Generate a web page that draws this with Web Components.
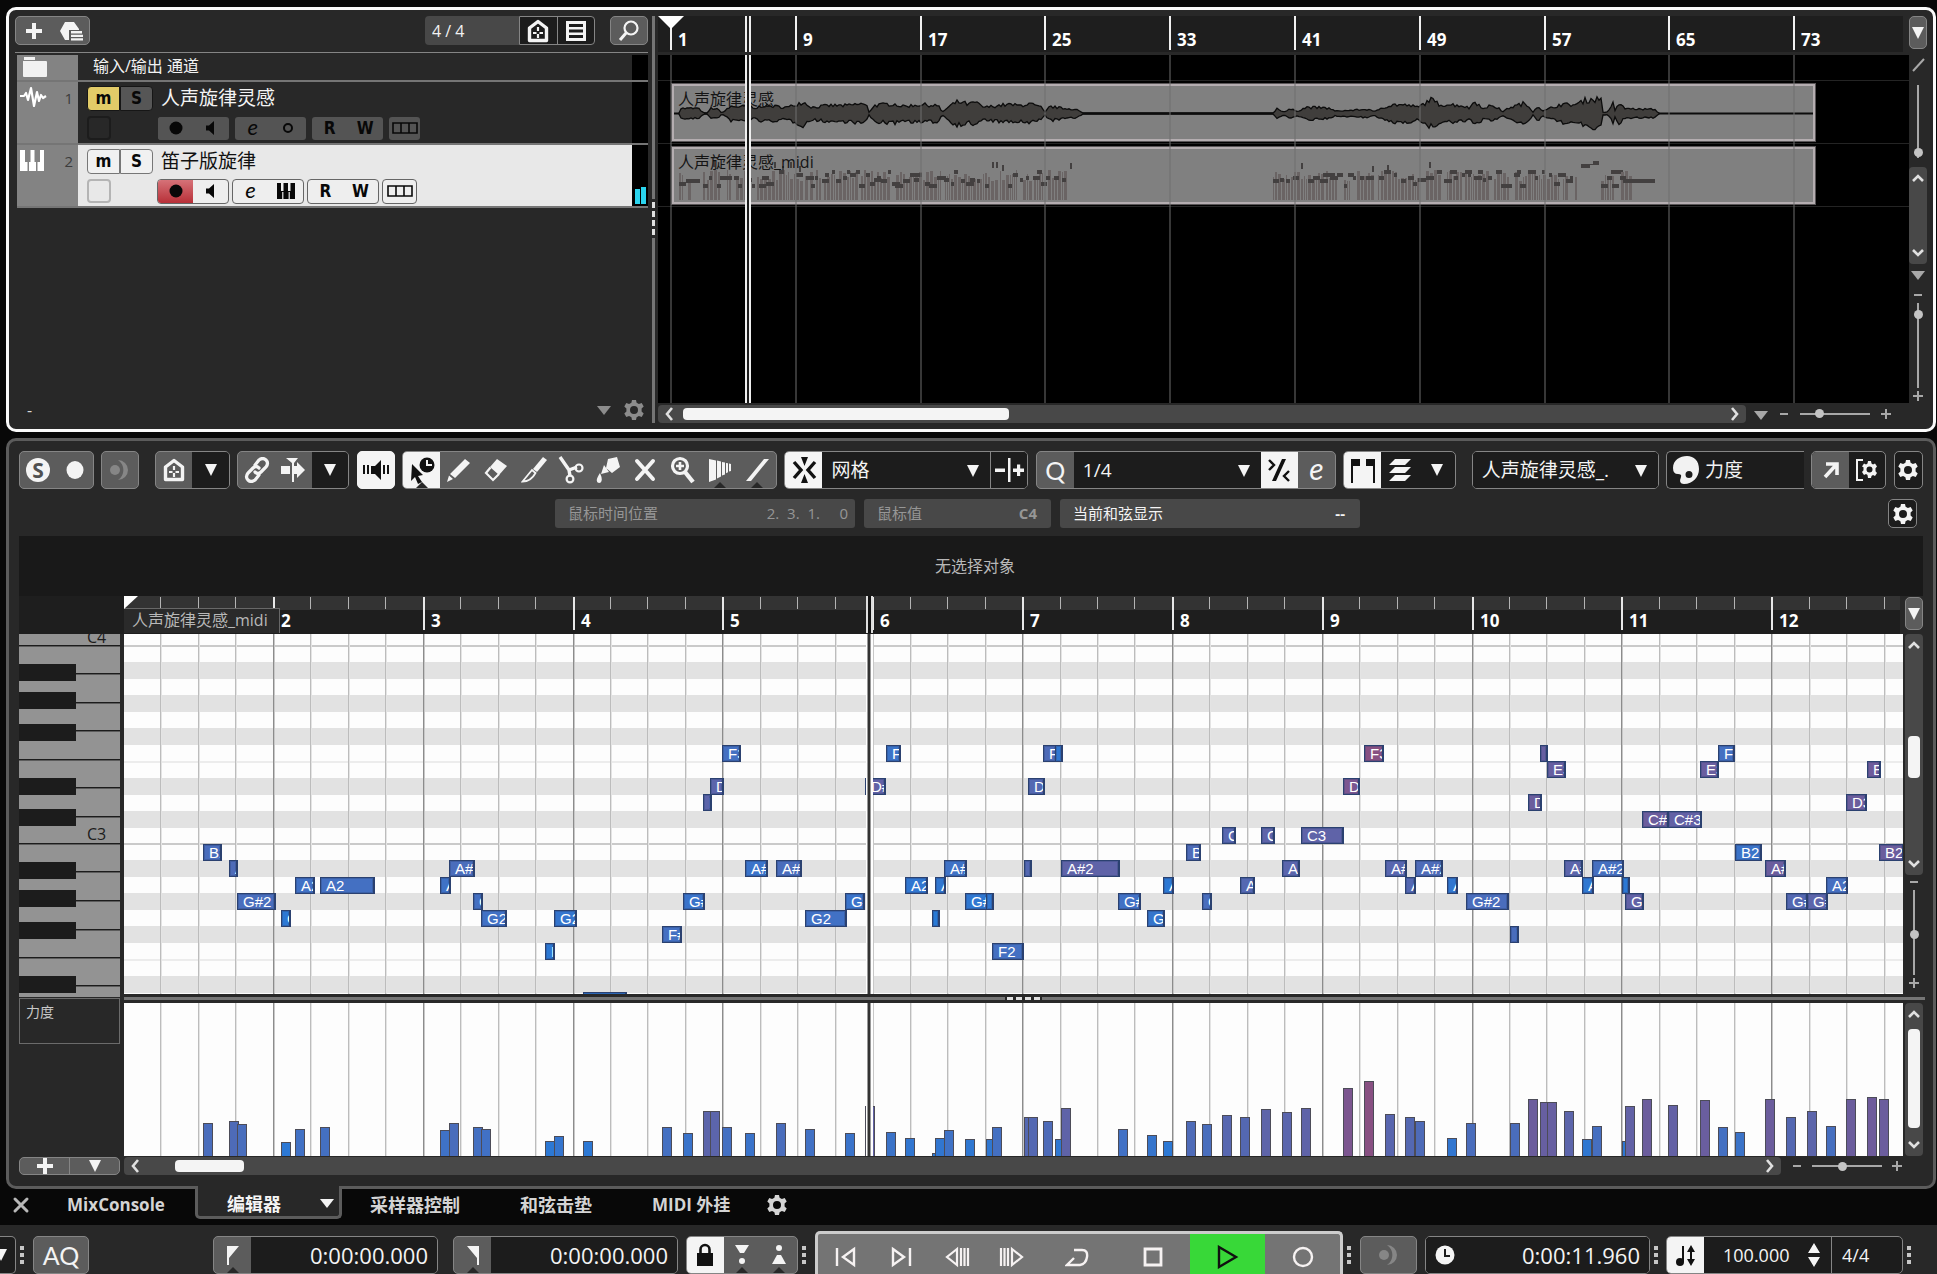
<!DOCTYPE html>
<html lang="zh">
<head>
<meta charset="utf-8">
<title>Project</title>
<style>
html,body{margin:0;background:#080808}
body{font-family:"Open Sans","Noto Sans CJK SC",sans-serif;font-size:16px;line-height:20px;color:#f2f2f2;overflow:hidden}
</style>
</head>
<body>
<daw-app></daw-app>
<script>
const FONT='"Open Sans","Noto Sans CJK SC",sans-serif';
const RESET=`*{box-sizing:border-box}
button,input,select{font:inherit;color:inherit;background:none;border:0;margin:0;padding:0;outline:0;border-radius:0}
button{cursor:pointer;display:flex;align-items:center;justify-content:center}
select{appearance:none;width:100%;height:100%}`;

class El extends HTMLElement{
  connectedCallback(){
    if(this.shadowRoot)return;
    this.attachShadow({mode:'open'}).innerHTML='<style>'+RESET+this.css()+'</style>'+this.html();
  }
  a(n,d=''){return this.getAttribute(n)??d}
  css(){return ':host{display:block}'}
  html(){return '<slot></slot>'}
}

/* each entry: width, height, markup drawn in that box */
const ICONS={
plus:[18,18,'<path d="M7 1h4v6h6v4h-6v6H7v-6H1V7h6z"/>'],
tag:[26,20,'<path d="M7 1h9l5 7v1H11v10H7L2 10z"/><path d="M13 10h11v2.600H13zM13 13.700h12v2.300H13zM13 17.200h12v2.300H13z"/>'],
home:[24,24,'<path d="M12 2.500 3.500 9v12.500h17V9z" fill="none" stroke="currentColor" stroke-width="3.400" stroke-linejoin="round"/><path d="M12 8v4m0 3v4M7 14h3.500m3 0H17" stroke="currentColor" stroke-width="2.200"/>'],
list:[22,22,'<path fill-rule="evenodd" d="M1 1h20v20H1zM4 4v3h14V4zM4 9.500v3h14v-3zM4 15v3h14v-3z"/>'],
search:[24,24,'<circle cx="14" cy="9" r="6.500" fill="none" stroke="currentColor" stroke-width="2.200"/><path d="M9.500 13.500 3 21" stroke="currentColor" stroke-width="3"/>'],
folder:[26,22,'<path d="M2 1h11v3H2zM1 5h23q1 0 1 1v14q0 1-1 1H2q-1 0-1-1z"/>'],
wave:[28,22,'<path d="M1 11h4l2-3 2 7 3-12 3 18 3-14 2 9 2-6 2 3 3-2" fill="none" stroke="currentColor" stroke-width="2.200" stroke-linejoin="round"/>'],
keys:[26,24,'<path d="M1 2h5v12h2.500v9H1zM10 14h1.500V2h4v12H17v9h-7zM21 2h4v21h-6.500v-9H21z"/>'],
keys2:[20,18,'<path d="M1 1h4v8h2.500V1h4.500v8h2.500V1H19v16H1z"/><path d="M6.800 10v7M13.200 10v7" stroke="#eee" stroke-width="1.200"/>'],
rec:[16,16,'<circle cx="8" cy="8" r="6.500"/>'],
ring:[16,16,'<circle cx="8" cy="8" r="4" fill="none" stroke="currentColor" stroke-width="2"/>'],
speaker:[16,16,'<path d="M3 5.500h3L11 1v14l-5-4.500H3z"/>'],
lanes:[26,14,'<path d="M1 2h24v10H1zM9 2v10M17 2v10" fill="none" stroke="currentColor" stroke-width="1.600"/>'],
down:[14,12,'<path d="M1 0h12L7 12z"/>'],
downs:[14,9,'<path d="M0 0h14L7 9z"/>'],
gear:[22,22,'<path fill-rule="evenodd" d="M9 1h4l.6 2.800 2.300 1.300L18.700 4l2 3.500-2.100 1.900v3.200l2.100 1.900-2 3.500-2.800-1.100-2.300 1.300L13 21H9l-.6-2.800-2.300-1.300L3.300 18l-2-3.500 2.100-1.900V9.400L1.300 7.500l2-3.500 2.800 1.100 2.300-1.300zM11 7a4 4 0 1 0 0 8 4 4 0 0 0 0-8z"/>'],
solo:[26,26,'<circle cx="13" cy="13" r="12"/><text x="13" y="20.500" text-anchor="middle" font-size="21" font-weight="700" font-family="Open Sans" fill="#505050">S</text>'],
dot:[18,20,'<ellipse cx="9" cy="10" rx="8.500" ry="9"/>'],
moon:[22,22,'<circle cx="6" cy="11" r="5"/><path d="M9 1a10 10 0 1 1 0 20 12 12 0 0 0 0-20z"/>'],
link:[26,26,'<g fill="none" stroke="currentColor" stroke-width="3.200" stroke-linecap="round"><path d="M11 8l4-5q4-3 7 0t0 7l-5 5q-3 3-6 0"/><path d="M15 18l-4 5q-4 3-7 0t0-7l5-5q3-3 6 0"/></g>'],
autoscroll:[26,26,'<path d="M1 9h9v8H1zM14 9h3V5l8 8-8 8v-4h-3zM6 1h12l-4 5v19h-2V6z"/>'],
sound:[28,24,'<path d="M9 8h4l6-6v20l-6-6H9zM1 7h2v9H1zM5 7h2v9H5zM21 7h2v9h-2zM25 7h2v9h-2z"/>'],
pointer:[30,28,'<path d="M5 8 16 19l-5 1 4 6-4 2-3-7-4 4z"/><circle cx="20" cy="9" r="7.500"/><path d="M20 4v5h5" fill="none" stroke="#f4f4f4" stroke-width="2"/>'],
pencil:[26,26,'<path d="M19 2l5 4L9 21l-5-4zM3 18.500 7 22l-6 3z"/>'],
eraser:[26,26,'<path d="M14 2 24 9l-8 9L7 10z"/><path d="M7.500 10.500 3 16l7 7 6-6" fill="none" stroke="currentColor" stroke-width="2.200"/>'],
knife:[26,26,'<path d="M22 0l4 3-10 12-4-3z"/><path d="M11 13 1.500 24.500q8.500 0 13-8.500z" fill="none" stroke="currentColor" stroke-width="1.800"/>'],
scissors:[26,28,'<path d="M2 1l9 13 8-3M11 14l1 6" fill="none" stroke="currentColor" stroke-width="3.400"/><circle cx="21" cy="12" r="3.500" fill="none" stroke="currentColor" stroke-width="2.200"/><circle cx="12" cy="23" r="3.400" fill="none" stroke="currentColor" stroke-width="2.200"/>'],
glue:[26,28,'<path d="M13 3l9-2 3 10-8 6-6-5zM9 9l5 7-8 2zM5 17q4 9-1 10-5-1 1-10z"/>'],
cross:[22,24,'<path d="M3 3l16 18M19 3 3 21" stroke="currentColor" stroke-width="4" stroke-linecap="round"/>'],
close:[18,18,'<path d="M3 3l12 12M15 3 3 15" stroke="#b8b8b8" stroke-width="3" stroke-linecap="round"/>'],
zoom:[26,28,'<circle cx="10" cy="10" r="7.500" fill="none" stroke="currentColor" stroke-width="3.200"/><path d="M10 6v8M6 10h8" stroke="currentColor" stroke-width="2.600"/><path d="m15 16 8 10" stroke="currentColor" stroke-width="4.400"/>'],
comp:[26,26,'<path d="M2 2l7 1.500v19L2 25zM10 3.500l4 1v15l-4 2zM15 5l3 .5v12l-3 1zM19 6l2 .3v9l-2 1zM22 6.500l2 .5v7l-2 .5z"/>'],
line:[26,26,'<path d="M20 2h5L7 24H2z"/>'],
snap:[26,30,'<path d="M10 2h7l-3.500 9zM10 28h7l-3.500-9z"/><path d="M3 7l7 8-7 8M24 7l-7 8 7 8" fill="none" stroke="currentColor" stroke-width="3.400"/>'],
rel:[30,26,'<path d="M1 11.500h10v3.500H1zM14 1h2.500v24H14zM19 11.500h4V7.500h3.200v4H30v3.500h-3.800v4H23v-4h-4z"/>'],
iq:[24,26,'<path d="M15 2h4L9 24H5z"/><path d="M2 3l5 5-5 5M22 14l-5 5 5 5" fill="none" stroke="currentColor" stroke-width="2.400"/>'],
flags:[26,28,'<path d="M1 3h9v7H3v17H1zM16 3h9v24h-2V10h-7z"/>'],
layers:[26,24,'<path d="M8 1h16l-6 6H2zM8 9h16l-6 6H2zM8 17h16l-6 6H2z"/>'],
palette:[28,30,'<path fill-rule="evenodd" d="M15 1c7 0 12 5 12 13S21 29 12 29q-6 0-3-7 1-3-3-3-5 0-5-6C1 5 8 1 15 1zM17 16a3.500 3.500 0 1 0 0 7 3.500 3.500 0 0 0 0-7z"/>'],
arrow:[20,20,'<path d="M5 4h11v11M15 5 4 17" fill="none" stroke="currentColor" stroke-width="3.600"/>'],
setup:[24,24,'<path d="M8 2H2v20h6" fill="none" stroke="currentColor" stroke-width="2"/><path fill-rule="evenodd" d="M13 3h3l.5 2.500 1.500 1L20 5.500l2 3-1.500 1.800v3l1.500 1.700-2 3-2-1-1.500 1L16 20h-3l-.5-3-1.500-1-2 1-2-3 1.500-1.700v-3L7 8.500l2-3 2 1 1.500-1zM14.500 8.500a3 3 0 1 0 0 6 3 3 0 0 0 0-6z"/>'],
slash:[14,14,'<path d="M13 1 2 13" stroke="currentColor" stroke-width="2"/>'],
minus:[10,10,'<path d="M1 4h8v2H1z"/>'],
plus2:[10,10,'<path d="M4 0h2v4h4v2H6v4H4V6H0V4h4z"/>'],
left:[10,14,'<path d="M8 1 3 7l5 6" fill="none" stroke="currentColor" stroke-width="2.600"/>'],
right:[10,14,'<path d="m2 1 5 6-5 6" fill="none" stroke="currentColor" stroke-width="2.600"/>'],
up2:[12,10,'<path d="m1 8 5-5 5 5" fill="none" stroke="currentColor" stroke-width="2.600"/>'],
down2:[12,10,'<path d="m1 2 5 5 5-5" fill="none" stroke="currentColor" stroke-width="2.600"/>'],
lloc:[16,20,'<path d="M2 1h12L4 13v7H2z"/>'],
rloc:[16,20,'<path d="M14 1H2l10 12v7h2z"/>'],
lock:[18,24,'<path d="M1 10h16v13H1z"/><path d="M4.500 11V6.500a4.500 4.500 0 0 1 9 0V11" fill="none" stroke="currentColor" stroke-width="2.600"/>'],
pin:[16,22,'<path d="M1 1h14l-5 8H6z"/><circle cx="8" cy="17" r="3"/>'],
pout:[16,22,'<path d="M1 20h14l-5-9H6z"/><circle cx="8" cy="4" r="3"/>'],
prev:[22,22,'<path d="M2 2v18M19 3 8 11l11 8z" fill="none" stroke="currentColor" stroke-width="2.400"/>'],
next:[22,22,'<path d="M20 2v18M3 3l11 8-11 8z" fill="none" stroke="currentColor" stroke-width="2.400"/>'],
rew:[26,22,'<path d="M13 3 3 11l10 8zM17 2v18M20.500 2v18M24 2v18" fill="none" stroke="currentColor" stroke-width="2.200"/>'],
fwd:[26,22,'<path d="m13 3 10 8-10 8zM9 2v18M5.500 2v18M2 2v18" fill="none" stroke="currentColor" stroke-width="2.200"/>'],
cycle:[26,22,'<path d="M9 4h8q6 0 5 7t-7 8H2l7-7" fill="none" stroke="currentColor" stroke-width="2.400"/>'],
stop:[22,22,'<path d="M3 3h16v16H3z" fill="none" stroke="currentColor" stroke-width="2.800"/>'],
play:[22,24,'<path d="m2 2 17 10L2 22z" fill="none" stroke="currentColor" stroke-width="2.400"/>'],
record:[22,22,'<circle cx="11" cy="11" r="9" fill="none" stroke="currentColor" stroke-width="2.400"/>'],
clock:[20,20,'<circle cx="10" cy="10" r="9.500"/><path d="M10 4v7h5" fill="none" stroke="#1c1c1c" stroke-width="2"/>'],
tempo:[22,24,'<circle cx="5" cy="19" r="4"/><path d="M7 3h2v16H7zM12 9l4-7 4 7h-3v7h3l-4 7-4-7h3V9z"/>'],
spin:[12,24,'<path d="M0 10 6 0l6 10zM0 14l6 10 6-10z"/>'],
dots:[4,20,'<path d="M0 1h4v4H0zM0 8h4v4H0zM0 15h4v4H0z"/>']
};
customElements.define('daw-icon',class extends El{
  css(){return ':host{display:block;flex:none}svg{display:block}'}
  html(){const [w,h,m]=ICONS[this.a('name')];
    return `<svg width="${w}" height="${h}" viewBox="0 0 ${w} ${h}" fill="currentColor" aria-hidden="true">${m}</svg>`}
});
const ic=n=>`<daw-icon name="${n}"></daw-icon>`;

/* bordered strip that joins several cells */
customElements.define('tool-group',class extends El{
  css(){return `:host{display:flex;flex:none;height:38px;border:1px solid #858585;border-radius:5px;overflow:hidden;background:#5c5c5c}
  :host([dark]){background:#1c1c1c}:host([on]){background:#f4f4f4;border-color:#f4f4f4}:host([short]){height:29px}`}
});
customElements.define('tool-cell',class extends El{
  css(){return `:host{display:block;position:relative;flex:1 1 0;min-width:0;color:#f4f4f4}
  :host([tone=dark]){background:#1c1c1c}:host([tone=on]){background:#f4f4f4;color:#111}:host([tone=off]){color:#868686}
  :host([line]){border-left:1px solid #858585}
  :host([fix]){flex:0 0 37px}
  button{width:100%;height:100%}
  .txt{font-size:25px;line-height:30px;font-family:Lato,"Open Sans",sans-serif}
  .e{font:italic 30px/30px Lato,sans-serif;padding-bottom:5px}
  i{position:absolute;left:50%;bottom:0;margin-left:-6px;border:6px solid transparent;border-top:0;border-bottom-color:#282828}`}
  html(){const t=this.a('text');
    return `<button type="button" aria-label="${this.a('label',this.a('icon')||t)}">${t?`<span class="${t==='e'?'e':'txt'}">${t}</span>`:ic(this.a('icon'))}</button>${this.hasAttribute('menu')?'<i></i>':''}`}
});
customElements.define('tool-select',class extends El{
  css(){return `:host{display:block;position:relative;flex:1;min-width:0;background:#1c1c1c;font-size:19px;color:#f4f4f4}
  select{padding-left:9px;line-height:28px}
  daw-icon{position:absolute;right:10px;top:50%;margin-top:-5px;pointer-events:none}`}
  html(){return `<select aria-label="${this.a('label')}"><option>${this.a('value')}</option></select>${ic('down')}`}
});

/* zoom slider with end signs */
customElements.define('zoom-slider',class extends El{
  css(){return `:host{display:flex;align-items:center;gap:8px;color:#a8a8a8}
  :host([vertical]){flex-direction:column;gap:3px}
  input{appearance:none;width:70px;height:14px;background:linear-gradient(#a8a8a8,#a8a8a8) center/100% 2px no-repeat}
  :host([vertical]) input{writing-mode:vertical-lr;width:14px;height:var(--len,85px);background-size:2px 100%}
  input::-webkit-slider-thumb{appearance:none;width:9px;height:9px;border-radius:5px;background:#c4c4c4}`}
  html(){const bare=this.hasAttribute('bare');
    return (bare?'':ic('minus'))+`<input type="range" aria-label="${this.a('label')}" value="${this.a('value',30)}">`+(bare?'':ic('plus2'))}
});
customElements.define('scroll-bar',class extends El{
  css(){return `:host{display:flex;align-items:center;justify-content:space-between;background:#484848;border-radius:4px;color:#e0e0e0;height:18px;padding:0 6px;flex:1}
  :host([vertical]){flex-direction:column;width:18px;height:auto;padding:6px 0}
  .track{flex:1;display:flex;align-self:stretch;align-items:center}
  .thumb{background:#f4f4f4;border-radius:4px;height:12px;width:var(--size);margin-left:var(--at)}
  :host([vertical]) .track{flex-direction:column}
  :host([vertical]) .thumb{width:12px;height:var(--size);margin:var(--at) 0 0}`}
  html(){const v=this.hasAttribute('vertical');
    return ic(v?'up2':'left')+`<div class="track">${this.hasAttribute('full')?'':'<div class="thumb"></div>'}</div>`+ic(v?'down2':'right')}
});

/* ---------- track list ---------- */
customElements.define('track-row',class extends El{
  css(){return `:host{display:flex;height:63px;border-bottom:2px solid #757575;color:#f4f4f4}
  .gut{width:61px;background:#838383;display:flex;justify-content:space-between;padding:3px 5px 0 2px;color:#fff}
  .num{color:#3c3c3c;font-size:15px;line-height:26px}
  .body{flex:1;padding:4px 0 0 9px;display:flex;flex-direction:column;gap:6px}
  :host([sel]) .body{background:#e8e8e8;color:#111}
  .l{display:flex;align-items:center;height:24px}
  .ms{display:flex;width:66px;height:25px;margin-right:8px}
  .ms button{flex:1;background:#565656;border:1px solid #161616;color:#080808;border-radius:0 4px 4px 0}
  .ms button:first-child{border-radius:4px 0 0 4px;background:#e2cb68}
  :host([sel]) .ms button{background:#f1f1f1;border-color:#777}
  b{font:700 17px/20px "DejaVu Sans Condensed","DejaVu Sans",sans-serif}
  .name{font-size:19px;line-height:24px}
  .sq{width:24px;height:24px;border:2px solid #1c1c1c;border-radius:4px;margin-right:47px}
  :host([sel]) .sq{border-color:#b4b4b4;margin-right:46px}
  .g{display:flex;width:71px;height:23px;background:#545454;border-radius:3px;color:#080808;margin-right:6px;overflow:hidden}
  .g.s{width:31px}
  :host([sel]) .g{width:72px;height:25px;margin-right:3px;background:#eee;border:1px solid #666;border-radius:4px}
  :host([sel]) .g.s{width:35px}
  .g button{flex:1}.rec{background:#545454}
  :host([sel]) .rec{background:linear-gradient(#d67278,#b83038)}
  em{font:italic 22px/20px Lato,sans-serif;padding-bottom:3px}
  .meter{width:16px;background:#000;display:flex;align-items:flex-end;gap:1px;padding:0 2px 2px 3px}
  .meter i{width:5px;background:#2ad4ee;height:15px}.meter i+i{height:17px}`}
  html(){const s=this.hasAttribute('sel');
    return `<div class="gut">${ic(this.a('icon'))}<span class="num">${this.a('num')}</span></div>
    <div class="body"><div class="l"><div class="ms"><button aria-label="mute"><b>m</b></button><button aria-label="solo"><b>S</b></button></div><span class="name"><slot></slot></span></div>
    <div class="l"><button class="sq" aria-label="colour"></button>
    <div class="g"><button class="rec" aria-label="record">${ic('rec')}</button><button aria-label="monitor">${ic('speaker')}</button></div>
    <div class="g"><button aria-label="edit"><em>e</em></button><button aria-label="instrument">${ic(s?'keys2':'ring')}</button></div>
    <div class="g"><button aria-label="read"><b>R</b></button><button aria-label="write"><b>W</b></button></div>
    <div class="g s"><button aria-label="lanes">${ic('lanes')}</button></div></div></div>
    <div class="meter">${s?'<i></i><i></i>':''}</div>`}
});
customElements.define('track-list',class extends El{
  css(){return `:host{display:flex;flex-direction:column;width:633px;flex:none}
  .bar{display:flex;height:29px}
  .bar tool-group:first-child{width:75px}
  .sig{width:94px;background:#484848;border-radius:4px 0 0 4px;margin-left:auto;padding-left:7px;font-size:16px}
  .pair{width:76px;margin-right:15px;border-radius:0 4px 4px 0}.find{width:38px}
  .rows{border-top:1px solid #858585;margin-top:7px;padding:2px 0 0 2px}
  .io{display:flex;height:27px;border-bottom:2px solid #757575}
  .io div:first-child{width:61px;background:#838383;padding:1px 0 0 5px}
  .io div:last-child{width:16px;background:#000}
  .io span{flex:1;padding-left:15px;line-height:22px}
  .foot{display:flex;align-items:center;margin:auto 0 1px;height:24px;color:#8c8c8c;gap:12px;padding:0 3px 0 12px}
  .foot span{flex:1;color:#d8d8d8}`}
  html(){return `<div class="bar"><tool-group short><tool-cell icon="plus"></tool-cell><tool-cell icon="tag"></tool-cell></tool-group>
    <input class="sig" aria-label="Signature" value="4 / 4">
    <tool-group short dark class="pair"><tool-cell icon="home"></tool-cell><tool-cell icon="list" line></tool-cell></tool-group>
    <tool-group short class="find"><tool-cell icon="search"></tool-cell></tool-group></div>
  <div class="rows"><div class="io"><div>${ic('folder')}</div><span>输入/输出 通道</span><div></div></div>
  <track-row icon="wave" num="1">人声旋律灵感</track-row>
  <track-row icon="keys" num="2" sel>笛子版旋律</track-row></div>
  <div class="foot"><span>-</span>${ic('downs')}${ic('gear')}</div>`}
});

/* ---------- arrangement ---------- */
let seed=7;const rnd=()=>(seed=(seed*16807)%2147483647)/2147483647;
const BAR8=124.8,X0=12;
/* x and half height of the audio envelope */
const ENV=[[8,0],[10,5],[27,5],[33,0],[36,0],[40,5],[47,4],[51,0],[56,4],[60,7],[79,7],[83,4],[91,8],[117,6],[124,9],[132,12],[141,6],[157,8],[177,8],[191,10],[196,7],[198,1],[203,8],[222,10],[232,7],[249,9],[267,8],[271,1],[281,9],[287,12],[299,9],[303,12],[313,6],[327,8],[337,9],[349,8],[358,10],[370,6],[374,1],[379,7],[392,5],[405,4],[412,0],[602,0],[606,5],[613,1],[619,4],[627,2],[635,6],[642,6],[659,5],[664,2],[682,3],[698,4],[703,1],[711,6],[724,9],[739,8],[747,6],[756,12],[758,15],[769,9],[779,9],[791,8],[799,5],[803,13],[809,8],[815,4],[820,9],[829,4],[831,1],[839,6],[852,10],[859,6],[862,1],[867,8],[872,2],[879,5],[889,9],[905,9],[915,14],[930,15],[932,1],[937,1],[942,10],[944,3],[947,10],[954,5],[969,4],[983,4],[988,0]];
function wave(){
  const up=[],dn=[];let k=0;
  for(let x=ENV[0][0];x<=ENV.at(-1)[0];x+=2){
    while(ENV[k+1][0]<x)k++;
    const [x1,a1]=ENV[k],[x2,a2]=ENV[k+1],a=a1+(a2-a1)*(x-x1)/(x2-x1);
    up.push(x+','+(30-a*(.7+rnd()*.45)).toFixed(1));dn.unshift(x+','+(31+a*(.7+rnd()*.45)).toFixed(1));
  }
  return [...up,...dn].join(' ');
}
function sticks(a,b){
  let s='';
  for(let x=a;x<b;){const w=1+Math.floor(rnd()*3),t=24+rnd()*11;
    s+=`<path d="M${x} ${t.toFixed(0)}h${w}V54h-${w}z" fill="#6a6464"/>`;x+=w+1+(rnd()>.85?Math.floor(rnd()*7):0);}
  for(let x=a;x<b;x+=3+Math.floor(rnd()*6)){const w=rnd()>.88?1:3+Math.floor(rnd()*6),y=w===1?15+Math.floor(rnd()*6):[24,27,30,30,32,33,36,38][Math.floor(rnd()*8)];
    s+=`<rect x="${x}" y="${y}" width="${w===1?2:w}" height="${w===1?6:4}" fill="#434040"/>`;}
  return s;
}
customElements.define('daw-clip',class extends El{
  css(){return `:host{display:block;position:absolute;left:13px;width:1145px;height:59px;background:#808080;border:1px solid #5a5658;box-shadow:inset 0 0 0 2px #b4adb0}
  svg{position:absolute;left:-1px;top:-1px}
  span{position:absolute;left:6px;top:4px;font-size:16px;line-height:22px;color:#141414}`}
  html(){return (this.a('kind')==='audio'
    ?`<svg width="1145" height="59"><path d="M3 30.500H1142" stroke="#0c0c0c" stroke-width="2"/><polygon points="${wave()}" fill="#403e3c" stroke="#0c0c0c" stroke-width="1.300"/></svg>`
    :`<svg width="1145" height="59">${sticks(8,22)+sticks(32,50)+sticks(56,400)+sticks(602,905)}<path d="M910 18h12v-3h6v4h-9v3h-9zM940 24h12v4h-12zM960 33h24v4h-24z" fill="#434040"/>${sticks(930,960)}</svg>`)+'<span><slot></slot></span>'}
});
customElements.define('arrange-ruler',class extends El{
  css(){return `:host{display:block;position:relative;height:36px;background:#1e1e1e;overflow:hidden;margin-right:6px}
  span{position:absolute;top:0;height:34px;border-left:2px solid #f0f0f0;padding:14px 0 0 6px;font-weight:700;font-size:17px;line-height:20px;color:#fff}
  svg{position:absolute;left:0;top:0}
  .ph{position:absolute;left:87px;width:6px;top:0;bottom:0;border:solid #eee;border-width:0 2px}`}
  html(){let s='';for(let i=0;i<10;i++)s+=`<span style="left:${Math.round(X0+i*BAR8)}px">${1+i*8}</span>`;
    return s+'<svg width="28" height="14"><path d="M0 0h26L13 13z" fill="#fff"/></svg><div class="ph"></div>'}
});
customElements.define('arrange-canvas',class extends El{
  css(){return `:host{display:block;position:relative;height:348px;background:#000;overflow:hidden}
  .v{position:absolute;top:0;bottom:0;width:2px;background:#6e6e6e80;z-index:1}
  .h{position:absolute;left:0;right:0;height:1px;background:#242424}
  .ph{position:absolute;left:87px;width:6px;top:0;bottom:0;border:solid #eee;border-width:0 2px;background:#1c1c1c;z-index:2}`}
  html(){let s='';for(let i=0;i<10;i++)s+=`<div class="v" style="left:${Math.round(X0+i*BAR8)}px"></div>`;
    for(const y of[25,88,151])s+=`<div class="h" style="top:${y}px"></div>`;
    return s+'<daw-clip kind="audio" style="top:28px">人声旋律灵感</daw-clip><daw-clip kind="midi" style="top:91px">人声旋律灵感_midi</daw-clip><div class="ph"></div>'}
});
customElements.define('project-zone',class extends El{
  css(){return `:host{display:flex;margin:7px 1px 0 6px;border:3px solid #fbfbfb;border-radius:10px;background:#282828;padding:6px}
  .split{width:3px;margin:0 3px 0 4px;background:linear-gradient(#757575,#757575) 0 0/3px 183px no-repeat,repeating-linear-gradient(#e0e0e0 0 6px,#282828 6px 9px) 0 186px/3px 33px no-repeat,linear-gradient(#757575,#757575) 0 100%/3px calc(100% - 222px) no-repeat}
  .main{flex:1;min-width:0;display:flex;flex-direction:column}
  arrange-canvas{margin-top:3px}
  .hs{display:flex;align-items:center;height:19px;margin-top:1px;padding-right:18px;color:#a8a8a8;gap:8px}
  scroll-bar.h{--size:326px;--at:9px}
  .hs zoom-slider{gap:11px;margin-left:3px}.hs>daw-icon{margin-top:4px}
  .side{width:18px;display:flex;flex-direction:column;align-items:center;color:#a8a8a8}
  .side tool-group{width:18px;height:33px;margin-bottom:9px}
  .top{--len:73px;margin:13px 0 9px}
  .bar{flex:none;height:97px;margin-bottom:7px}
  .side zoom-slider:last-child{margin-top:10px}`}
  html(){return `<track-list></track-list><div class="split"></div>
  <div class="main"><arrange-ruler></arrange-ruler><arrange-canvas></arrange-canvas>
  <div class="hs"><scroll-bar class="h"></scroll-bar>${ic('downs')}<zoom-slider label="Zoom" value="24"></zoom-slider></div></div>
  <div class="side"><tool-group><tool-cell icon="down"></tool-cell></tool-group>${ic('slash')}<zoom-slider vertical bare class="top" label="Waveform zoom" value="98"></zoom-slider>
  <scroll-bar vertical full class="bar"></scroll-bar>${ic('downs')}<zoom-slider vertical label="Track height" value="9"></zoom-slider></div>`}
});

/* ---------- key editor ---------- */
const BEAT=37.46,PX=742; /* beat width and play cursor x */
const PITCH={'C':0,'C#':1,'D':2,'D#':3,'E':4,'F':5,'F#':6,'G':7,'G#':8,'A':9,'A#':10,'B':11};
const laneY=n=>Math.floor(193.5-16.5*n);
const pitch=s=>PITCH[s.slice(0,-1)]+12*(s.at(-1)-3);
/* start, width, pitch, velocity height */
const NOTES=[[203,19,'B2',33],[229,9,'A#2',35],[237,39,'G#2',32],[281,10,'G2',14],[295,20,'A2',27],[320,55,'A2',29],[440,11,'A2',26],[449,26,'A#2',33],[473,10,'G#2',29],[481,26,'G2',27],[545,10,'F2',15],[554,23,'G2',20],[583,44,'D2',15],
[662,20,'F#2',29],[683,22,'G#2',23],[703,9,'D3',45],[710,14,'D#3',45],[722,19,'F3',29],[745,23,'A#2',23],[776,26,'A#2',33],[805,42,'G2',27],[845,20,'G#2',23],[865,21,'D#3',50],[886,15,'F3',24],[905,23,'A2',18],[932,5,'G2',3],[935,11,'A2',18],[944,23,'A#2',26],[965,23,'G#2',17],[986,8,'G#2',17],[992,32,'F2',29],[1024,6,'A#2',39],[1028,17,'D#3',39],[1043,14,'F3',35],[1055,8,'F3',17],[1061,59,'A#2',48],[1118,23,'G#2',27],[1147,18,'G2',21],[1163,11,'A2',15],[1186,15,'B2',35],[1202,10,'G#2',32],[1222,14,'C3',41],[1240,15,'A2',39],[1261,14,'C3',47],[1282,18,'A#2',44],
[1301,43,'C3',48],[1343,17,'D#3',68],[1364,20,'F3',75],[1385,22,'A#2',42],[1405,11,'A2',39],[1415,28,'A#2',35],[1447,11,'A2',18],[1466,43,'G#2',33],[1510,9,'F#2',33],[1528,14,'D3',57],[1540,8,'F3',54],[1547,19,'E3',54],[1564,19,'A#2',45],[1582,12,'A2',17],[1592,32,'A#2',30],[1622,5,'A2',15],[1625,19,'G#2',50],[1642,27,'C#3',57],[1668,34,'C#3',51],[1700,19,'E3',56],[1718,17,'F3',29],[1735,27,'B2',24],[1765,21,'A#2',57],[1786,22,'G#2',39],[1807,21,'G#2',45],[1826,22,'A2',30],[1846,21,'D3',57],[1867,14,'E3',59],[1879,25,'B2',57]];
const STOPS=[[0,[40,122,214]],[15,[44,120,212]],[29,[68,112,194]],[39,[84,104,178]],[50,[98,98,166]],[58,[108,92,156]],[68,[124,86,144]],[75,[136,80,130]]];
function tint(h){let k=0;while(k<STOPS.length-2&&STOPS[k+1][0]<h)k++;
  const [a,c]=STOPS[k],[b,d]=STOPS[k+1],t=(h-a)/(b-a);return `rgb(${c.map((v,i)=>Math.round(v+(d[i]-v)*t)).join()})`}
function grid(){let s='';for(let i=1;i<=47;i++)s+=`<div class="${i%4?'b':'B'}" style="left:${Math.round(i*BEAT-1)}px"></div>`;return s}
const GRIDCSS=`.b,.B{position:absolute;top:0;bottom:0;width:1px;background:#bcbcbc;box-shadow:1px 0 #e4e4e4}.B{background:#8c8c8c;box-shadow:1px 0 #c8c8c8}
.ph{position:absolute;left:${PX}px;width:7px;top:0;bottom:0;background:linear-gradient(90deg,#fff 1px,#999 1px 2px,#333 2px 4px,#999 4px 5px,#fff 5px)}`;
customElements.define('edit-ruler',class extends El{
  css(){return `:host{display:block;position:relative;height:38px;overflow:hidden;margin-right:3px;background:linear-gradient(#333 14px,#1e1e1e 14px)}
  .t{position:absolute;top:1px;height:12px;width:1px;background:#b4b4b4}
  .n{position:absolute;top:1px;height:33px;border-left:2px solid #e8e8e8;padding:14px 0 0 6px;font-weight:700;font-size:17px;line-height:20px;color:#fff}
  .lbl{position:absolute;left:0;top:12px;width:156px;height:25px;background:#2a2a2a;border:solid #686868;border-width:1px 1px 0 0;padding-left:8px;font-size:16px;line-height:23px;color:#b8b8b8;white-space:nowrap}
  svg{position:absolute;left:0;top:0}
  .p{position:absolute;left:${PX}px;width:7px;top:0;height:37px;border:solid #ddd;border-width:0 2px;background:#111}`}
  html(){let s='';for(let i=1;i<=47;i++){const x=Math.round(i*BEAT-1);s+=i%4?`<div class="t" style="left:${x}px"></div>`:`<span class="n" style="left:${x}px">${i/4+1}</span>`}
    return s+'<div class="lbl">人声旋律灵感_midi</div><svg width="14" height="13"><path d="M0 0h14L0 13z" fill="#fff"/></svg><div class="p"></div>'}
});
customElements.define('key-board',class extends El{
  css(){return `:host{display:block;position:relative;width:101px;height:363px;background:#939393;overflow:hidden}
  .w{position:absolute;left:0;right:0;height:2px;background:#1c1c1c;border-bottom:1px solid #5c5c5c}
  .k{position:absolute;left:0;width:57px;height:17px;background:#1c1c1c}
  span{position:absolute;left:68px;font-size:16px;line-height:20px;color:#1c1c1c}`}
  html(){let s='';for(const y of[11,39,68,96,125,153,182,209,237,266,295,323,351])s+=`<div class="w" style="top:${y}px"></div>`;
    for(const y of[30,58,90,144,175,228,256,288,342])s+=`<div class="k" style="top:${y}px"></div>`;
    return s+'<span style="top:-7px">C4</span><span style="top:190px">C3</span>'}
});
customElements.define('note-roll',class extends El{
  css(){return `:host{display:block;position:relative;flex:1;min-height:360px;background:#fdfdfd;overflow:hidden}
  .d{position:absolute;left:0;right:0;height:17px;background:#e2e2e2}
  .o{position:absolute;left:0;right:0;height:2px;background:#cacaca}.f{background:#ececec}${GRIDCSS}
  .n{position:absolute;height:17px;overflow:hidden;border:1px solid #2b4170;border-right-width:2px;box-shadow:inset 0 0 0 1px #2b417050;padding-left:5px;font:15px/16px "Liberation Sans",sans-serif;color:#fff;white-space:nowrap}`}
  html(){let s='';for(let n=-10;n<12;n++)if([1,3,6,8,10].includes((n+24)%12))s+=`<div class="d" style="top:${laneY(n)}px"></div>`;
    s+='<div class="o" style="top:11px"></div><div class="o" style="top:209px"></div><div class="o f" style="top:127px"></div><div class="o f" style="top:325px"></div>'+grid();
    for(const [x,w,p,v] of NOTES)s+=`<div class="n" style="left:${x-124}px;width:${w}px;top:${laneY(pitch(p))}px;background:${tint(v)}">${w>8?p:''}</div>`;
    return s+'<div class="ph"></div>'}
});
customElements.define('velocity-lane',class extends El{
  css(){return `:host{display:block;position:relative;height:153px;background:#fdfdfd;overflow:hidden}${GRIDCSS}
  .v{position:absolute;bottom:0;width:10px;border:1px solid #4c4c58;border-bottom:0}`}
  html(){return grid()+NOTES.map(([x,,,v])=>`<div class="v" style="left:${x-124}px;height:${v}px;background:${tint(v)}"></div>`).join('')+'<div class="ph"></div>'}
});
customElements.define('info-field',class extends El{
  css(){return `:host{display:flex;justify-content:space-between;align-items:center;background:#484848;border-radius:3px;height:29px;padding:0 7px 2px 13px;font-size:15px;color:#969696;white-space:pre}
  :host([strong]){color:#f4f4f4}b{font-weight:700}`}
  html(){return `<span>${this.a('label')}</span><slot></slot>`}
});
customElements.define('editor-toolbar',class extends El{
  css(){return `:host{display:flex;justify-content:space-between}
  .w1{width:38px}.w2{width:75px}.w3{width:112px}.gapr{margin-right:8px}
  .tools{width:375px}.snap{width:244px}.q{width:300px}.ev{width:113px}.part{width:187px}.col{width:138px;border-right:0;border-radius:5px 0 0 5px;align-items:center;font-size:19px;padding-left:5px;gap:5px}.gear{width:29px}`}
  html(){const c=(i,x='')=>`<tool-cell icon="${i}" ${x}></tool-cell>`;
    return `<tool-group class="w2">${c('solo')+c('dot')}</tool-group>
  <tool-group class="w1 gapr">${c('moon','tone="off"')}</tool-group>
  <tool-group class="w2">${c('home')+c('down','tone="dark"')}</tool-group>
  <tool-group class="w3">${c('link')+c('autoscroll')+c('down','tone="dark"')}</tool-group>
  <tool-group class="w1" on>${c('sound','tone="on"')}</tool-group>
  <tool-group class="tools">${c('pointer','tone="on" menu')+['pencil','eraser','knife','scissors','glue','cross','zoom'].map(n=>c(n)).join('')+c('comp','menu')+c('line','menu')}</tool-group>
  <tool-group class="snap" dark>${c('snap','tone="on" fix')}<tool-select label="Snap type" value="网格"></tool-select>${c('rel','tone="dark" fix line')}</tool-group>
  <tool-group class="q"><tool-cell text="Q" fix></tool-cell><tool-select label="Quantize" value="1/4"></tool-select>${c('iq','tone="on" fix')}<tool-cell text="e" fix></tool-cell></tool-group>
  <tool-group class="ev gapr" dark>${c('flags','tone="on"')+c('layers')+c('down')}</tool-group>
  <tool-group class="part" dark><tool-select label="Part" value="人声旋律灵感_."></tool-select></tool-group>
  <tool-group class="col" dark>${ic('palette')}<span>力度</span></tool-group>
  <tool-group class="w2" dark>${c('arrow','style="background:#5c5c5c"')+c('setup')}</tool-group>
  <tool-group class="gear" dark>${c('gear')}</tool-group>`}
});
customElements.define('editor-zone',class extends El{
  css(){return `:host{display:flex;flex-direction:column;flex:1;margin:6px 1px 0 6px;border:3px solid #5c5c5c;border-radius:10px;background:#282828;padding:10px 10px 11px}
  .info{display:flex;justify-content:center;gap:9px;margin:10px 0 8px;padding-left:536px}
  .info .end{margin-left:auto;width:29px;margin-right:6px}
  .status{height:60px;background:#191919;display:flex;align-items:center;justify-content:center;color:#b8b8b8;padding-left:8px}
  .body{display:flex;flex:1}
  .l{width:105px;display:flex;flex-direction:column}
  .corner{height:38px;background:#1e1e1e}
  .ctl{width:101px;height:46px;border:1px solid #6b6b6b;margin-top:1px;padding:3px 6px;font-size:14px;color:#c8c8c8}
  .m{flex:1;min-width:0;display:flex;flex-direction:column}
  .div{height:9px;background:linear-gradient(#757575,#757575) 0 3px/100% 3px no-repeat;display:flex;align-items:center;justify-content:center}
  .div i{display:block;width:37px;height:3px;background:repeating-linear-gradient(90deg,#e0e0e0 0 6px,#282828 6px 9px);border:solid #282828;border-width:0 2px;margin-left:20px}
  .r{width:20px;padding-left:2px;display:flex;flex-direction:column;align-items:center}
  .r tool-group{width:18px;height:33px;margin:1px 0 4px}
  .s1{flex:none;height:241px;--size:42px;--at:86px;margin-bottom:2px}
  .rz{flex:1;display:flex;flex-direction:column;min-height:360px}
  .r .div{width:22px}
  .s2{flex:none;height:153px;--size:99px;--at:10px}
  .bot{display:flex;height:18px;margin-top:1px}
  .bot tool-group{width:101px;height:18px;margin-right:4px}
  .bot scroll-bar{--size:69px;--at:35px}
  .bot zoom-slider{gap:10px;width:142px;padding-left:11px}`}
  html(){return `<editor-toolbar></editor-toolbar>
  <div class="info"><info-field label="鼠标时间位置" style="width:300px"><span>2.  3.  1.     0</span></info-field>
  <info-field label="鼠标值" style="width:187px;padding-right:14px"><b>C4</b></info-field>
  <info-field label="当前和弦显示" strong style="width:300px;padding-right:15px"><b>--</b></info-field>
  <tool-group dark short class="end"><tool-cell icon="gear"></tool-cell></tool-group></div>
  <div class="status">无选择对象</div>
  <div class="body"><div class="l"><div class="corner"></div><key-board></key-board><div class="ctl">力度</div></div>
  <div class="m"><edit-ruler></edit-ruler><note-roll></note-roll><div class="div"><i></i></div><velocity-lane></velocity-lane></div>
  <div class="r"><tool-group><tool-cell icon="down"></tool-cell></tool-group><div class="rz"><scroll-bar vertical class="s1"></scroll-bar><zoom-slider vertical label="Vertical zoom" value="52"></zoom-slider></div><div class="div"></div><scroll-bar vertical class="s2"></scroll-bar></div></div>
  <div class="bot"><tool-group><tool-cell icon="plus"></tool-cell><tool-cell icon="down" line></tool-cell></tool-group><scroll-bar></scroll-bar><zoom-slider label="Horizontal zoom" value="42"></zoom-slider></div>`}
});

/* ---------- lower tabs and transport ---------- */
customElements.define('zone-tabs',class extends El{
  css(){return `:host{display:flex;height:36px;align-items:center;color:#d4d4d4;font-weight:600;font-size:18px;line-height:24px;padding:0 0 5px 10px}
  button{height:30px}
  .x{width:22px}.mix{margin-left:35px;font-size:17px;font-weight:700;width:98px}
  .sel{position:relative;align-self:flex-start;width:147px;height:33px;margin:-3px 28px 0 30px;border:3px solid #5c5c5c;border-top:0;border-radius:0 0 5px 5px;background:#282828;color:#f4f4f4;justify-content:flex-end;gap:39px;padding:5px 5px 0 0}
  .t{margin-right:60px}.midi{font-size:17px;font-weight:700;margin-right:36px}`}
  html(){return `<button class="x" aria-label="close">${ic('close')}</button><button class="mix">MixConsole</button><button class="sel">编辑器${ic('downs')}</button><button class="t">采样器控制</button><button class="t">和弦击垫</button><button class="midi">MIDI 外挂</button><button aria-label="settings">${ic('gear')}</button>`}
});
customElements.define('transport-bar',class extends El{
  css(){return `:host{display:flex;height:49px;background:#282828;overflow:hidden;padding-top:11px;color:#c8c8c8}
  .dots{margin:9px 0 0 4px}
  .cut{width:16px;border-left:0;border-radius:0 5px 5px 0;justify-content:flex-end}
  .cut tool-cell{flex:0 0 28px}
  .aq{width:56px;margin:0 124px 0 9px}
  .time{width:225px}
  .time input{flex:1;min-width:0;background:#1c1c1c;text-align:right;font-size:22px;padding-right:9px;color:#f4f4f4}
  .r15{margin-right:15px}.r8{margin-right:8px}
  .lock{width:112px}
  .tp{display:flex;width:528px;height:46px;margin:-5px 0 0 9px;border:3px solid #ccc;border-bottom:0;border-radius:5px 5px 0 0;background:#747474;color:#f6f2f2}
  .tp button{flex:1 1 57px;padding-top:2px}.tp .wide{flex:0 0 75px}.tp .go{background:#38d838;color:#111}
  .pre{width:57px;margin:0 8px 0 9px}
  .tempo{width:237px;margin-left:8px;align-items:center}
  .tempo tool-cell{height:38px}
  .tempo input{width:76px;font-size:18px;padding-left:10px;color:#f4f4f4}
  .tempo input.bpm{width:104px;padding-left:19px}
  .tempo .sig{flex:1;border-left:1px solid #858585;height:38px}
  .tempo daw-icon{color:#f4f4f4;margin-right:11px}`}
  html(){const d=`<daw-icon name="dots" class="dots"></daw-icon>`,c=(i,x='')=>`<tool-cell icon="${i}" ${x}></tool-cell>`;
    return `<tool-group dark class="cut">${c('down')}</tool-group>${d}
  <tool-group class="aq"><tool-cell text="AQ"></tool-cell></tool-group>
  <tool-group class="time r15">${c('lloc','fix menu')}<input aria-label="Left locator" value="0:00:00.000"></tool-group>
  <tool-group class="time r8">${c('rloc','fix menu')}<input aria-label="Right locator" value="0:00:00.000"></tool-group>
  <tool-group class="lock">${c('lock','tone="on"')+c('pin','menu')+c('pout','menu')}</tool-group>${d}
  <div class="tp">${['prev','next','rew','fwd'].map(n=>`<button aria-label="${n}">${ic(n)}</button>`).join('')}<button class="wide" aria-label="cycle">${ic('cycle')}</button><button class="wide" aria-label="stop">${ic('stop')}</button><button class="wide go" aria-label="play">${ic('play')}</button><button class="wide" aria-label="record">${ic('record')}</button></div>${d}
  <tool-group class="pre">${c('moon','tone="off"')}</tool-group>
  <tool-group class="time" dark>${c('clock','tone="dark" fix')}<input aria-label="Position" value="0:00:11.960"></tool-group>${d}
  <tool-group class="tempo" dark>${c('tempo','tone="on" fix')}<input class="bpm" aria-label="Tempo" value="100.000">${ic('spin')}<input class="sig" aria-label="Time signature" value="4/4"></tool-group>${d}`}
});
customElements.define('daw-app',class extends El{
  css(){return `:host{display:flex;flex-direction:column;min-height:100vh;background:#080808;font-family:${FONT}}`}
  html(){return '<project-zone></project-zone><editor-zone></editor-zone><zone-tabs></zone-tabs><transport-bar></transport-bar>'}
});
</script>
</body>
</html>
